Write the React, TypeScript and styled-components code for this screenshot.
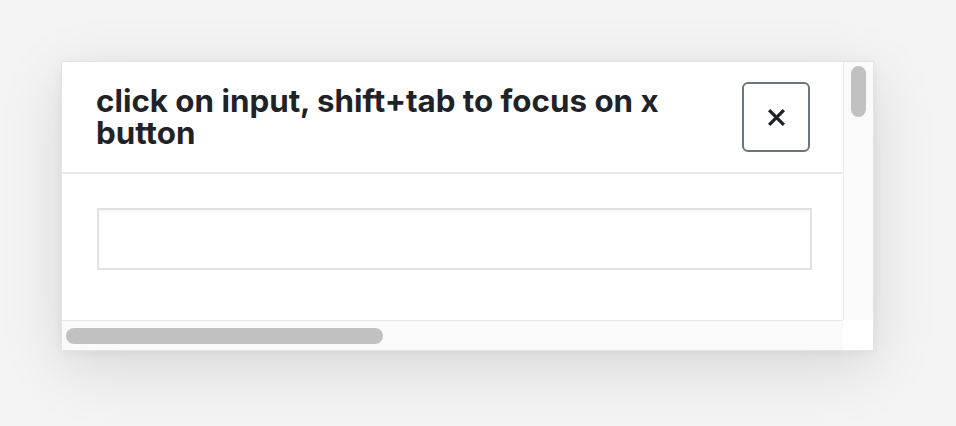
import React from 'react';
import styled, { createGlobalStyle } from 'styled-components';

const GlobalStyle = createGlobalStyle`
  html, body {
    margin: 0;
    padding: 0;
    background-color: #f4f4f4;
    font-family: Inter, "Liberation Sans", Arial, sans-serif;
  }
`;

const Stage = styled.div`
  padding: 61px 0 0 61px;
  height: 426px;
  box-sizing: border-box;
`;

const Dialog = styled.div`
  display: grid;
  grid-template-columns: 1fr 30px;
  grid-template-rows: 1fr 30px;
  width: 811px;
  height: 288px;
  border: 1px solid #e4e4e7;
  background-color: #fff;
  box-shadow: 0 16px 60px rgba(0, 0, 0, 0.12), 0 2px 10px rgba(0, 0, 0, 0.05);
`;

const Viewport = styled.div`
  min-width: 0;
  min-height: 0;
  overflow: hidden;
`;

const Track = styled.div<{ vertical?: boolean }>`
  display: flex;
  box-sizing: border-box;
  background-color: #fafafa;
  border-${(p) => (p.vertical ? 'left' : 'top')}: 1px solid #e8e8e8;
  padding: ${(p) => (p.vertical ? '4px 7px 4px 7px' : '7px 4px 6px 4px')};
`;

const Thumb = styled.div<{ vertical?: boolean }>`
  flex-shrink: 0;
  width: ${(p) => (p.vertical ? '15px' : '317px')};
  height: ${(p) => (p.vertical ? '51px' : '16px')};
  border-radius: 8px;
  background-color: #c1c1c1;
`;

const Corner = styled.div`
  background-color: #fff;
`;

const Header = styled.div`
  display: flex;
  align-items: center;
  justify-content: space-between;
  gap: 24px;
  padding: 20px 33px 20px 34px;
  border-bottom: 2px solid #e9e9ec;
`;

const Title = styled.h5`
  flex: 1;
  margin: 0;
  color: #1f2328;
  font-size: 31.3px;
  font-weight: 700;
  line-height: 32px;
`;

const CloseButton = styled.button`
  display: flex;
  align-items: center;
  justify-content: center;
  flex-shrink: 0;
  width: 68px;
  height: 70px;
  padding: 0;
  border: 2px solid #6c757d;
  border-radius: 6px;
  background-color: #fff;
  cursor: pointer;
`;

const Body = styled.div`
  padding: 34px 0 0 35px;
`;

const TextInput = styled.input`
  display: block;
  width: 715px;
  height: 62px;
  box-sizing: border-box;
  border: 2px solid #e2e2e2;
  border-radius: 0;
  box-shadow: inset 0 2px 2px rgba(0, 0, 0, 0.03);
  outline: none;
`;

const CloseIcon = () => (
  <svg width="21" height="21" viewBox="0 0 20 20" aria-hidden="true">
    <path d="M3 3 L17 17 M17 3 L3 17" stroke="#1f2328" strokeWidth="3.2" />
  </svg>
);

const App: React.FC = () => {
  return (
    <>
      <GlobalStyle />
      <Stage>
        <Dialog>
          <Viewport>
            <Header>
              <Title>click on input, shift+tab to focus on x button</Title>
              <CloseButton aria-label="Close">
                <CloseIcon />
              </CloseButton>
            </Header>
            <Body>
              <TextInput type="text" />
            </Body>
          </Viewport>
          <Track vertical>
            <Thumb vertical />
          </Track>
          <Track>
            <Thumb />
          </Track>
          <Corner />
        </Dialog>
      </Stage>
    </>
  );
};

export default App;
